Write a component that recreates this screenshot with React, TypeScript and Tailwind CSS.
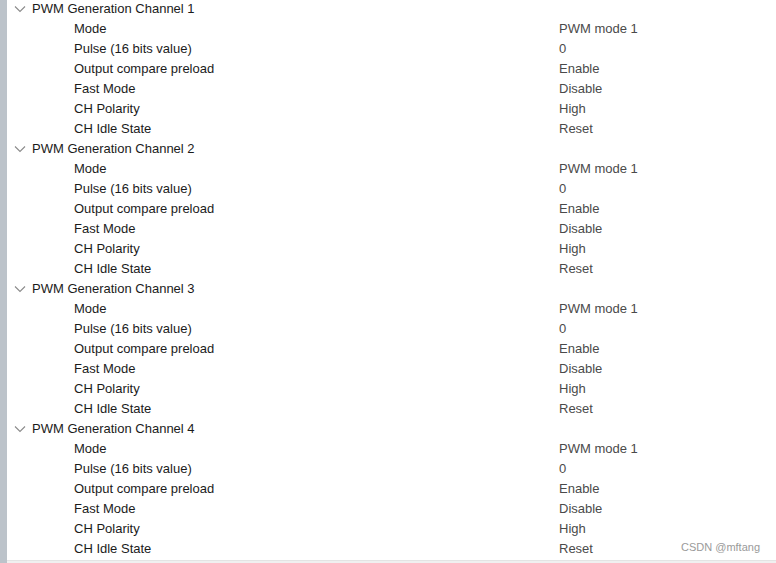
import React from "react";

const rows: [string, string][] = [
  ["Mode", "PWM mode 1"],
  ["Pulse (16 bits value)", "0"],
  ["Output compare preload", "Enable"],
  ["Fast Mode", "Disable"],
  ["CH Polarity", "High"],
  ["CH Idle State", "Reset"],
];

function Chevron() {
  return (
    <svg width="12" height="8" viewBox="0 0 12 8" className="shrink-0">
      <path d="M1 1.5 L6 6.5 L11 1.5" fill="none" stroke="#8a8a8a" strokeWidth="1.1" />
    </svg>
  );
}

export default function App() {
  return (
    <div
      className="relative w-[776px] h-[563px] bg-white flex overflow-hidden"
      style={{ fontFamily: '"Liberation Sans", Arial, sans-serif' }}
    >
      <div className="w-[7px] h-full bg-[#bcc3ca] shrink-0" />
      <div className="flex-1 flex flex-col">
        <div className="flex-1">
          {[1, 2, 3, 4].map((n) => (
            <div key={n}>
              <div className="h-[20px] pb-[2px] flex items-center pl-[7px] gap-[6px] text-[13px] text-[#1b1b1b]">
                <Chevron />
                <span>PWM Generation Channel {n}</span>
              </div>
              {rows.map(([k, v]) => (
                <div key={k} className="h-[20px] pb-[2px] flex items-center text-[13px]">
                  <span className="w-[552px] pl-[67px] text-[#1b1b1b]">{k}</span>
                  <span className="text-[#4a4a4a]">{v}</span>
                </div>
              ))}
            </div>
          ))}
        </div>
        <div className="h-[3px] bg-[#f0f0f0] border-t border-[#e4e4e4]" />
      </div>
      <div className="absolute left-[681px] top-[539px] text-[11px] text-[#9a9a9a]">CSDN @mftang</div>
    </div>
  );
}
